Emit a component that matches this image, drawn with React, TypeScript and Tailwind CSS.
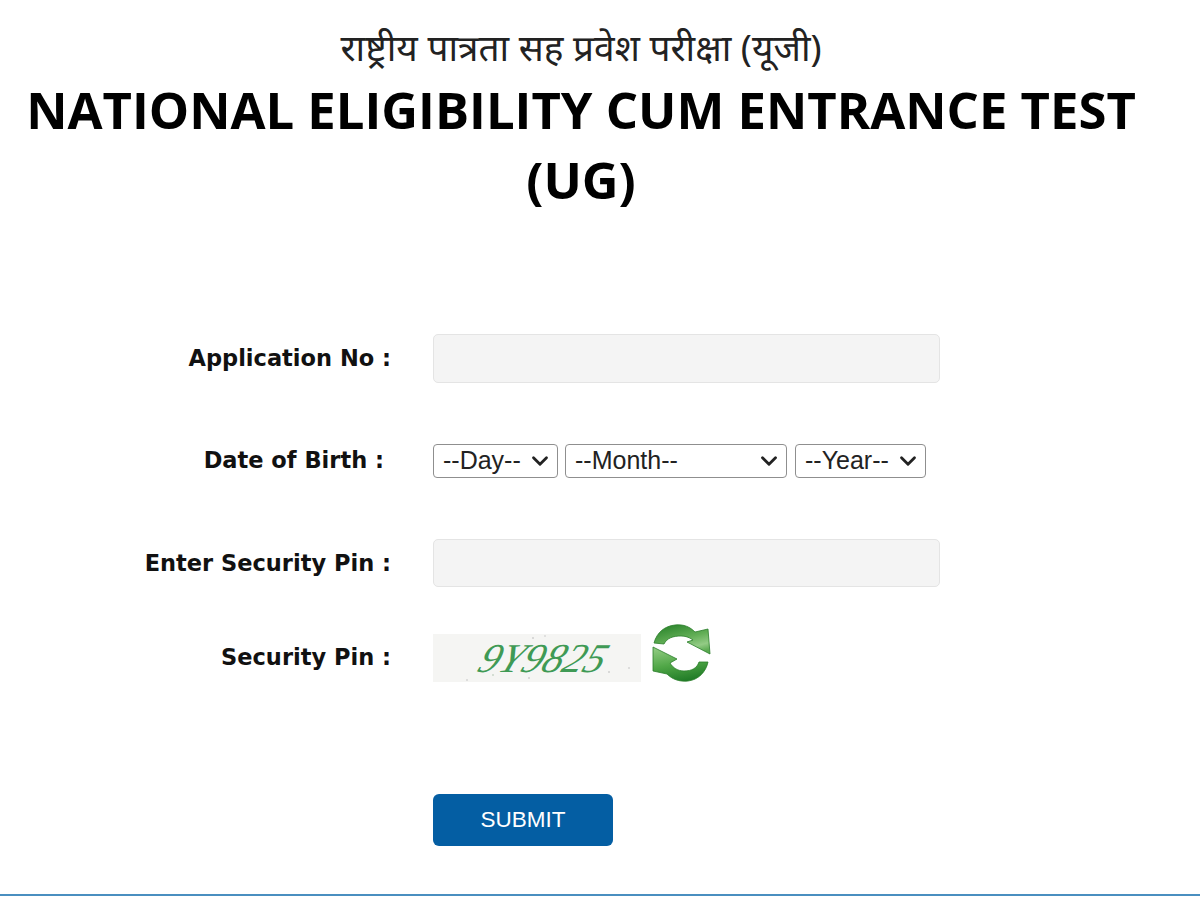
import { ChevronDown } from 'lucide-react';

const labelClass = "w-[391px] text-right font-['DejaVu_Sans',sans-serif] text-[22.5px] font-bold text-[#111]";

function NativeSelect({ label, width }: { label: string; width: string }) {
  return (
    <div className={`${width} h-[34px] flex items-center justify-between pl-[9px] pr-[4px] bg-white border border-[#8f8f8f] rounded-[4px]`}>
      <span className="pb-[2px] text-[25px] leading-none text-[#222]">{label}</span>
      <ChevronDown size={26} strokeWidth={2.6} className="text-[#222]" />
    </div>
  );
}

function RefreshIcon() {
  return (
    <svg width="60" height="58" viewBox="0 0 60 58" className="block">
      <defs>
        <linearGradient id="g1" x1="0.2" y1="0" x2="0.7" y2="1">
          <stop offset="0" stopColor="#2a842b" />
          <stop offset="0.5" stopColor="#62ae56" />
          <stop offset="0.8" stopColor="#93cb85" />
          <stop offset="1" stopColor="#5aaa50" />
        </linearGradient>
        <linearGradient id="g2" x1="0.3" y1="0" x2="0.6" y2="1">
          <stop offset="0" stopColor="#8cc97d" />
          <stop offset="0.5" stopColor="#4fa646" />
          <stop offset="1" stopColor="#1f7a26" />
        </linearGradient>
      </defs>
      <path d="M3 19 C6 8 14 2 24 1 C33 0 39 3 44 8 L57 5 L59 30 L36 18 L42 16 C38 13 34 12 30 12 C22 12 16 14 13 20 Z" fill="url(#g1)" stroke="#2a7d2a" strokeWidth="0.8" />
      <path d="M2 23 L26 35 L19 39 C22 44 27 47 33 47 C41 47 46 44 48 38 L57 38 C55 48 47 56 37 57 C28 58 21 55 16 50 L2 47 Z" fill="url(#g2)" stroke="#2a7d2a" strokeWidth="0.8" />
    </svg>
  );
}

function CaptchaNoise() {
  return (
    <svg width="208" height="48" viewBox="0 0 208 48" className="absolute inset-0">
      <circle cx="60" cy="41" r="1" fill="#c9d6c9" />
      <circle cx="96" cy="44" r="1" fill="#cfcfcf" />
      <circle cx="100" cy="4" r="1" fill="#cfcfcf" />
      <circle cx="112" cy="2" r="1" fill="#d8d8d8" />
      <circle cx="176" cy="38" r="1" fill="#cfcfcf" />
      <circle cx="196" cy="34" r="1" fill="#d5d5d5" />
      <circle cx="34" cy="46" r="1" fill="#d5d5d5" />
    </svg>
  );
}

export default function App() {
  return (
    <div className="w-[1200px] h-[900px] overflow-hidden bg-white font-['Liberation_Sans',sans-serif]">
      <div className="w-[1162px] pt-[24px] text-center text-black">
        <p className="text-[37px] leading-[46px] font-['Noto_Sans','Liberation_Sans',sans-serif] text-[#222]">राष्ट्रीय पात्रता सह प्रवेश परीक्षा (यूजी)</p>
        <h1 className="mt-[5px] text-[50.8px] leading-[70px] font-bold font-['Open_Sans',sans-serif]">
          NATIONAL ELIGIBILITY CUM ENTRANCE TEST (UG)
        </h1>
      </div>

      <div className="mt-[119px] flex flex-col">
        <div className="flex items-center">
          <div className={labelClass}>Application No :</div>
          <div className="ml-[42px] w-[507px] h-[49px] bg-[#f4f4f4] border border-[#e4e4e4] rounded-[5px]" />
        </div>

        <div className="mt-[61px] flex items-center">
          <div className={`${labelClass} pr-[7px]`}>Date of Birth :</div>
          <div className="ml-[42px] flex gap-[7px]">
            <NativeSelect label="--Day--" width="w-[125px]" />
            <NativeSelect label="--Month--" width="w-[222px]" />
            <div className="ml-[1px]">
              <NativeSelect label="--Year--" width="w-[131px]" />
            </div>
          </div>
        </div>

        <div className="mt-[61px] flex items-center">
          <div className={`${labelClass} pt-[2px]`}>Enter Security Pin :</div>
          <div className="ml-[42px] w-[507px] h-[48px] bg-[#f4f4f4] border border-[#e4e4e4] rounded-[5px]" />
        </div>

        <div className="mt-[37px] flex items-end">
          <div className={`${labelClass} self-end pb-[7px]`}>Security Pin :</div>
          <div className="relative ml-[42px] w-[208px] h-[48px] bg-[#f5f5f3] flex items-center justify-center pl-[13px]">
            <CaptchaNoise />
            <span className="relative -skew-x-[22deg] text-[41px] leading-none italic font-['Liberation_Serif',serif] text-[#3f9a55]">9Y9825</span>
          </div>
          <div className="ml-[10px]"><RefreshIcon /></div>
        </div>

        <div className="mt-[112px] ml-[433px]">
          <button className="w-[180px] h-[52px] rounded-[6px] bg-[#045ea3] text-white text-[22.5px]">SUBMIT</button>
        </div>
      </div>

      <div className="mt-[48px] h-[2px] bg-[#4a8fc0]" />
    </div>
  );
}
